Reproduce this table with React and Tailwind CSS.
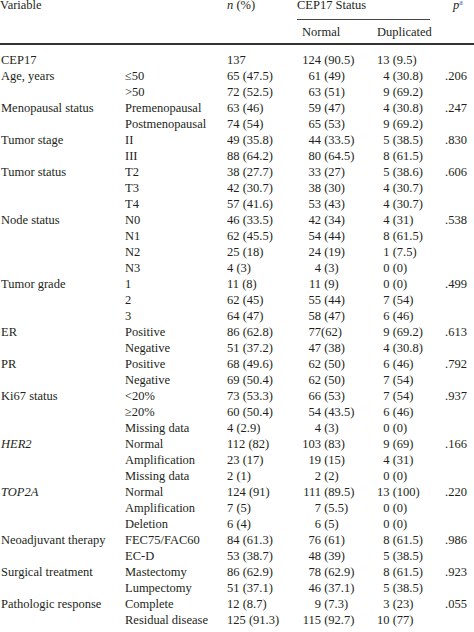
import React from "react";

const rows = [
  ["CEP17", "", "137", "124 (90.5)", "13 (9.5)", ""],
  ["Age, years", "≤50", "65 (47.5)", "61 (49)", "4 (30.8)", ".206"],
  ["", ">50", "72 (52.5)", "63 (51)", "9 (69.2)", ""],
  ["Menopausal status", "Premenopausal", "63 (46)", "59 (47)", "4 (30.8)", ".247"],
  ["", "Postmenopausal", "74 (54)", "65 (53)", "9 (69.2)", ""],
  ["Tumor stage", "II", "49 (35.8)", "44 (33.5)", "5 (38.5)", ".830"],
  ["", "III", "88 (64.2)", "80 (64.5)", "8 (61.5)", ""],
  ["Tumor status", "T2", "38 (27.7)", "33 (27)", "5 (38.6)", ".606"],
  ["", "T3", "42 (30.7)", "38 (30)", "4 (30.7)", ""],
  ["", "T4", "57 (41.6)", "53 (43)", "4 (30.7)", ""],
  ["Node status", "N0", "46 (33.5)", "42 (34)", "4 (31)", ".538"],
  ["", "N1", "62 (45.5)", "54 (44)", "8 (61.5)", ""],
  ["", "N2", "25 (18)", "24 (19)", "1 (7.5)", ""],
  ["", "N3", "4 (3)", "4 (3)", "0 (0)", ""],
  ["Tumor grade", "1", "11 (8)", "11 (9)", "0 (0)", ".499"],
  ["", "2", "62 (45)", "55 (44)", "7 (54)", ""],
  ["", "3", "64 (47)", "58 (47)", "6 (46)", ""],
  ["ER", "Positive", "86 (62.8)", "77(62)", "9 (69.2)", ".613"],
  ["", "Negative", "51 (37.2)", "47 (38)", "4 (30.8)", ""],
  ["PR", "Positive", "68 (49.6)", "62 (50)", "6 (46)", ".792"],
  ["", "Negative", "69 (50.4)", "62 (50)", "7 (54)", ""],
  ["Ki67 status", "<20%", "73 (53.3)", "66 (53)", "7 (54)", ".937"],
  ["", "≥20%", "60 (50.4)", "54 (43.5)", "6 (46)", ""],
  ["", "Missing data", "4 (2.9)", "4 (3)", "0 (0)", ""],
  ["HER2", "Normal", "112 (82)", "103 (83)", "9 (69)", ".166", true],
  ["", "Amplification", "23 (17)", "19 (15)", "4 (31)", ""],
  ["", "Missing data", "2 (1)", "2 (2)", "0 (0)", ""],
  ["TOP2A", "Normal", "124 (91)", "111 (89.5)", "13 (100)", ".220", true],
  ["", "Amplification", "7 (5)", "7 (5.5)", "0 (0)", ""],
  ["", "Deletion", "6 (4)", "6 (5)", "0 (0)", ""],
  ["Neoadjuvant therapy", "FEC75/FAC60", "84 (61.3)", "76 (61)", "8 (61.5)", ".986"],
  ["", "EC-D", "53 (38.7)", "48 (39)", "5 (38.5)", ""],
  ["Surgical treatment", "Mastectomy", "86 (62.9)", "78 (62.9)", "8 (61.5)", ".923"],
  ["", "Lumpectomy", "51 (37.1)", "46 (37.1)", "5 (38.5)", ""],
  ["Pathologic response", "Complete", "12 (8.7)", "9 (7.3)", "3 (23)", ".055"],
  ["", "Residual disease", "125 (91.3)", "115 (92.7)", "10 (77)", ""],
];

function Aligned({ value, width }) {
  const m = value.match(/^(\d+)(.*)$/);
  return (
    <span className="whitespace-pre">
      <span className={`inline-block text-right ${width}`}>{m[1]}</span>
      {m[2]}
    </span>
  );
}

const grid = "grid grid-cols-[124px_102px_75px_75px_68px_1fr]";

export default function App() {
  return (
    <div
      className="w-[474px] h-[632px] overflow-hidden bg-white text-[#231f20] text-[12.5px] leading-[16px] pl-px"
      style={{ fontFamily: '"Liberation Serif", "Times New Roman", serif' }}
    >
      {/* Header row A */}
      <div className={`${grid} mt-[-3px]`}>
        <div className="-ml-px">Variable</div>
        <div></div>
        <div>
          <span className="italic">n</span> (%)
        </div>
        <div className="col-span-2 -ml-[5px] w-[133px] border-b border-[#444] pb-[6px]">
          CEP17 Status
        </div>
        <div className="pl-2">
          <span className="italic">p</span>
          <sup className="text-[#4a63b8] text-[8px]">a</sup>
        </div>
      </div>
      {/* Header row B */}
      <div className={`${grid} pt-[4px]`}>
        <div></div>
        <div></div>
        <div></div>
        <div>Normal</div>
        <div>Duplicated</div>
        <div></div>
      </div>
      <div className="mt-[3px] -ml-px h-[1.5px] bg-[#333]"></div>
      {/* Body */}
      <div className="pt-[7px]">
        {rows.map((r, i) => (
          <div key={i} className={`${grid} h-[16px] whitespace-nowrap`}>
            <div className={r[6] ? "italic" : ""}>{r[0]}</div>
            <div>{r[1]}</div>
            <div>{r[2]}</div>
            <div>
              <Aligned value={r[3]} width="w-[19px]" />
            </div>
            <div>
              <Aligned value={r[4]} width="w-[12.5px]" />
            </div>
            <div>{r[5]}</div>
          </div>
        ))}
      </div>
    </div>
  );
}
